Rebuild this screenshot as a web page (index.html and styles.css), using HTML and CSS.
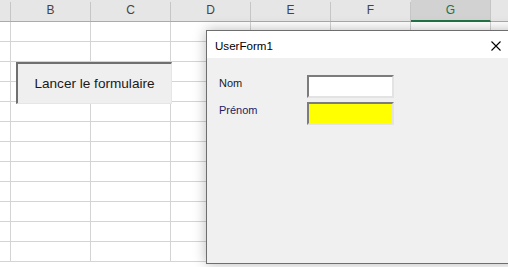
FILE: index.html
```html
<!DOCTYPE html>
<html lang="fr">
<head>
    <meta charset="UTF-8">
    <title>UserForm1</title>
    <link rel="stylesheet" href="styles.css">
</head>
<body>
    <div class="sheet">
        <div class="head">
            <div class="hcell first"></div>
            <div class="hcell">B</div>
            <div class="hcell">C</div>
            <div class="hcell">D</div>
            <div class="hcell">E</div>
            <div class="hcell">F</div>
            <div class="hcell selected">G</div>
            <div class="hcell last"></div>
        </div>
        <div class="rows">
            <div class="row"><div class="cell first"></div><div class="cell"></div><div class="cell"></div><div class="cell"></div><div class="cell"></div><div class="cell"></div><div class="cell"></div><div class="cell last"></div></div>
            <div class="row"><div class="cell first"></div><div class="cell"></div><div class="cell"></div><div class="cell"></div><div class="cell"></div><div class="cell"></div><div class="cell"></div><div class="cell last"></div></div>
            <div class="row"><div class="cell first"></div><div class="cell"></div><div class="cell"></div><div class="cell"></div><div class="cell"></div><div class="cell"></div><div class="cell"></div><div class="cell last"></div></div>
            <div class="row"><div class="cell first"></div><div class="cell"></div><div class="cell"></div><div class="cell"></div><div class="cell"></div><div class="cell"></div><div class="cell"></div><div class="cell last"></div></div>
            <div class="row"><div class="cell first"></div><div class="cell"></div><div class="cell"></div><div class="cell"></div><div class="cell"></div><div class="cell"></div><div class="cell"></div><div class="cell last"></div></div>
            <div class="row"><div class="cell first"></div><div class="cell"></div><div class="cell"></div><div class="cell"></div><div class="cell"></div><div class="cell"></div><div class="cell"></div><div class="cell last"></div></div>
            <div class="row"><div class="cell first"></div><div class="cell"></div><div class="cell"></div><div class="cell"></div><div class="cell"></div><div class="cell"></div><div class="cell"></div><div class="cell last"></div></div>
            <div class="row"><div class="cell first"></div><div class="cell"></div><div class="cell"></div><div class="cell"></div><div class="cell"></div><div class="cell"></div><div class="cell"></div><div class="cell last"></div></div>
            <div class="row"><div class="cell first"></div><div class="cell"></div><div class="cell"></div><div class="cell"></div><div class="cell"></div><div class="cell"></div><div class="cell"></div><div class="cell last"></div></div>
            <div class="row"><div class="cell first"></div><div class="cell"></div><div class="cell"></div><div class="cell"></div><div class="cell"></div><div class="cell"></div><div class="cell"></div><div class="cell last"></div></div>
            <div class="row"><div class="cell first"></div><div class="cell"></div><div class="cell"></div><div class="cell"></div><div class="cell"></div><div class="cell"></div><div class="cell"></div><div class="cell last"></div></div>
            <div class="row"><div class="cell first"></div><div class="cell"></div><div class="cell"></div><div class="cell"></div><div class="cell"></div><div class="cell"></div><div class="cell"></div><div class="cell last"></div></div>
        </div>

        <!-- bouton posé sur la feuille -->
        <button class="launch">Lancer le formulaire</button>

        <!-- fenêtre UserForm par-dessus la feuille -->
        <div class="form-window">
            <div class="title-bar">
                <span class="title">UserForm1</span>
                <span class="close">
                    <svg width="10" height="10" viewBox="0 0 10 10">
                        <path d="M0.5 0.5 L9.5 9.5 M9.5 0.5 L0.5 9.5" stroke="#000" stroke-width="1.1" fill="none"/>
                    </svg>
                </span>
            </div>
            <div class="form-body">
                <div class="field-label">Nom</div>
                <div class="textbox"></div>
                <div class="field-label blue">Prénom</div>
                <div class="textbox yellow"></div>
            </div>
        </div>
    </div>
</body>
</html>
```

FILE: styles.css
```css
body {
    margin: 0;
    background: #fff;
    font-family: "Liberation Sans", Arial, sans-serif;
    overflow: hidden;
}

.sheet {
    position: relative;
    width: 508px;
    height: 267px;
    overflow: hidden;
}

/* En-têtes de colonnes */
.head {
    display: flex;
    height: 22px;
    box-sizing: border-box;
    background: #e6e6e6;
    border-bottom: 1px solid #ababab;
}

.hcell {
    width: 80px;
    flex: none;
    box-sizing: border-box;
    border-right: 1px solid #c6c6c6;
    margin-top: 2px;
    font-size: 12px;
    color: #444;
    text-align: center;
    line-height: 17px;
}

.hcell.first {
    width: 11px;
}

.hcell.last {
    width: 40px;
    border-right: none;
}

.hcell.selected {
    margin-top: 0;
    padding-top: 2px;
    background: #d2d2d2;
    color: #217346;
    border-bottom: 2px solid #217346;
    margin-bottom: -1px;
}

/* Grille */
.row {
    display: flex;
    height: 20px;
}

.cell {
    width: 80px;
    flex: none;
    box-sizing: border-box;
    border-right: 1px solid #d4d4d4;
    border-bottom: 1px solid #d4d4d4;
}

.cell.first {
    width: 11px;
}

.cell.last {
    width: 40px;
    border-right: none;
}

.launch {
    position: absolute;
    left: 16px;
    top: 62px;
    width: 156px;
    height: 42px;
    box-sizing: border-box;
    background: #efefef;
    border: none;
    border-top: 2px solid #707070;
    border-left: 2px solid #707070;
    border-right: 1px solid #e6e6e6;
    border-bottom: 1px solid #e6e6e6;
    font-family: "Liberation Sans", Arial, sans-serif;
    font-size: 13.6px;
    color: #1a1a1a;
    padding: 0;
}

/* Fenêtre UserForm */
.form-window {
    position: absolute;
    left: 206px;
    top: 30px;
    width: 314px;
    height: 234px;
    box-sizing: border-box;
    border: 1px solid #6e6e6e;
    background: #f0f0f0;
    box-shadow: 0 0 12px rgba(0, 0, 0, 0.28);
    display: flex;
    flex-direction: column;
}

.title-bar {
    height: 27px;
    flex: none;
    background: #fff;
    display: flex;
    align-items: center;
    justify-content: space-between;
}

.title {
    padding-left: 8px;
    font-size: 11.6px;
    color: #000;
    padding-top: 1px;
}

.close {
    width: 46px;
    display: flex;
    justify-content: center;
    align-items: center;
    padding-top: 3px;
}

.form-body {
    display: grid;
    grid-template-columns: 88px 87px;
    grid-auto-rows: 23px;
    row-gap: 4px;
    padding: 17px 0 0 12px;
}

.field-label {
    font-size: 11px;
    color: #1a1a1a;
    padding-top: 2px;
}

.field-label.blue {
    color: #1c1c64;
}

.textbox {
    box-sizing: border-box;
    background: #fff;
    border: 2px solid;
    border-color: #7c7c7c #e3e3e3 #e3e3e3 #7c7c7c;
}

.textbox.yellow {
    background: #ffff00;
}
```
